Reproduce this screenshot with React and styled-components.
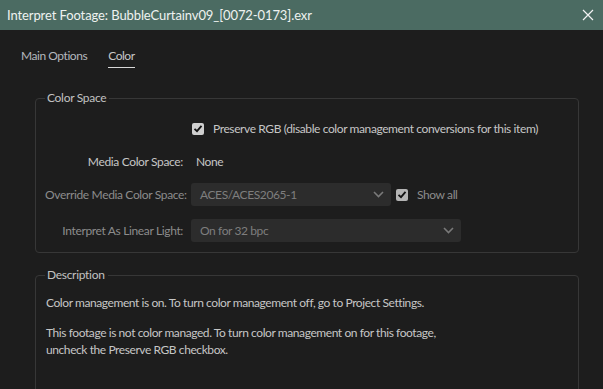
import React from 'react';
import styled, { createGlobalStyle } from 'styled-components';

const GlobalStyle = createGlobalStyle`
  html, body {
    margin: 0;
    padding: 0;
    background: #1d1d1d;
  }
  body {
    font-family: Lato, "Open Sans", sans-serif;
    font-size: 12px;
    color: #c6c6c6;
    overflow: hidden;
  }
`;

const Dialog = styled.div`
  width: 603px;
  height: 389px;
  background: #1d1d1d;
  display: flex;
  flex-direction: column;
  overflow: hidden;
`;

const TitleBar = styled.div`
  height: 30px;
  flex: none;
  background: #4b6b62;
  display: flex;
  align-items: center;
  justify-content: space-between;
  padding: 0 8px 0 7px;
  color: #eef2f0;
  font-size: 13px;
  letter-spacing: -0.1px;
`;

const CloseButton = styled.svg`
  width: 12px;
  height: 12px;
  margin-right: 1px;
`;

const Tabs = styled.div`
  display: flex;
  gap: 21px;
  padding: 18px 0 0 21px;
`;

const Tab = styled.div`
  line-height: 16px;
  padding-bottom: 3px;
  border-bottom: 1px solid ${p => (p.$active ? '#d8d8d8' : 'transparent')};
  color: ${p => (p.$active ? '#c8c8c8' : '#b4b8be')};
  letter-spacing: -0.45px;
`;

const Group = styled.fieldset`
  margin: ${p => p.$top}px 24px 0 35px;
  padding: 0 10px ${p => p.$bottom}px 9px;
  border: 1px solid #373737;
  border-radius: 4px;
  min-width: 0;
`;

const Legend = styled.legend`
  padding: 0 3px 0 2px;
  margin-left: 0;
  line-height: 14px;
  color: #c2c2c2;
  letter-spacing: -0.3px;
`;

const Form = styled.div`
  display: grid;
  grid-template-columns: 138px auto;
  column-gap: 8px;
  row-gap: 10px;
  padding-top: 12px;
  align-items: center;
`;

const Label = styled.div`
  text-align: right;
  color: ${p => (p.$disabled ? '#8c8c8c' : '#c6c6c6')};
  white-space: nowrap;
  letter-spacing: -0.35px;
  margin-top: ${p => p.$gap || 0}px;
`;

const Cell = styled.div`
  display: flex;
  align-items: center;
  height: 23px;
  gap: 9px;
  margin-top: ${p => p.$gap || 0}px;
  padding-left: ${p => p.$indent || 0}px;
  letter-spacing: -0.4px;
  color: ${p => (p.$disabled ? '#8c8c8c' : '#c6c6c6')};
  white-space: nowrap;
`;

const Check = styled.span`
  width: 12px;
  height: 12px;
  flex: none;
  border-radius: 2px;
  margin-left: ${p => p.$shift || 0}px;
  background: ${p => (p.$disabled ? '#b4b4b4' : '#cfcfcf')};
  display: flex;
  align-items: center;
  justify-content: center;
`;

const Select = styled.div`
  width: ${p => p.$width}px;
  height: 23px;
  border-radius: 3px;
  background: #2c2c2c;
  color: #7e7e7e;
  display: flex;
  align-items: center;
  justify-content: space-between;
  padding: 0 7px 0 9px;
  box-sizing: border-box;
`;

const Text = styled.p`
  margin: 0;
  line-height: 17px;
  letter-spacing: -0.42px;
  color: #c6c6c6;
  & + & {
    margin-top: 13px;
  }
`;

const Description = styled.div`
  padding-top: 12px;
  height: 120px;
  padding-left: 1px;
`;

const Tick = () => (
  <svg width="10" height="9" viewBox="0 0 10 9">
    <path d="M1.5 4.8 L4 7.2 L8.5 1.8" fill="none" stroke="#111" strokeWidth="1.8" />
  </svg>
);

const Chevron = () => (
  <svg width="11" height="7" viewBox="0 0 11 7">
    <path d="M1 1 L5.5 5.5 L10 1" fill="none" stroke="#7a7a7a" strokeWidth="1.6" />
  </svg>
);

export default function App() {
  return (
    <>
      <GlobalStyle />
      <Dialog>
        <TitleBar>
          <span>Interpret Footage: BubbleCurtainv09_[0072-0173].exr</span>
          <CloseButton viewBox="0 0 12 12">
            <path d="M1 1 L11 11 M11 1 L1 11" stroke="#f2f2f2" strokeWidth="1.2" />
          </CloseButton>
        </TitleBar>

        <Tabs>
          <Tab>Main Options</Tab>
          <Tab $active>Color</Tab>
        </Tabs>

        <Group $top={23} $bottom={10}>
          <Legend>Color Space</Legend>
          <Form>
            <Label />
            <Cell $indent={1}>
              <Check><Tick /></Check>
              Preserve RGB (disable color management conversions for this item)
            </Cell>

            <Label>Media Color Space:</Label>
            <Cell $indent={5}>None</Cell>

            <Label $disabled>Override Media Color Space:</Label>
            <Cell $disabled>
              <Select $width={200}>
                ACES/ACES2065-1
                <Chevron />
              </Select>
              <Check $disabled $shift={-4}><Tick /></Check>
              Show all
            </Cell>

            <Label $disabled $gap={3}>Interpret As Linear Light:</Label>
            <Cell $gap={3}>
              <Select $width={270}>
                On for 32 bpc
                <Chevron />
              </Select>
            </Cell>
          </Form>
        </Group>

        <Group $top={15} $bottom={0}>
          <Legend>Description</Legend>
          <Description>
            <Text>Color management is on. To turn color management off, go to Project Settings.</Text>
            <Text>
              This footage is not color managed. To turn color management on for this footage,
              <br />
              uncheck the Preserve RGB checkbox.
            </Text>
          </Description>
        </Group>
      </Dialog>
    </>
  );
}
